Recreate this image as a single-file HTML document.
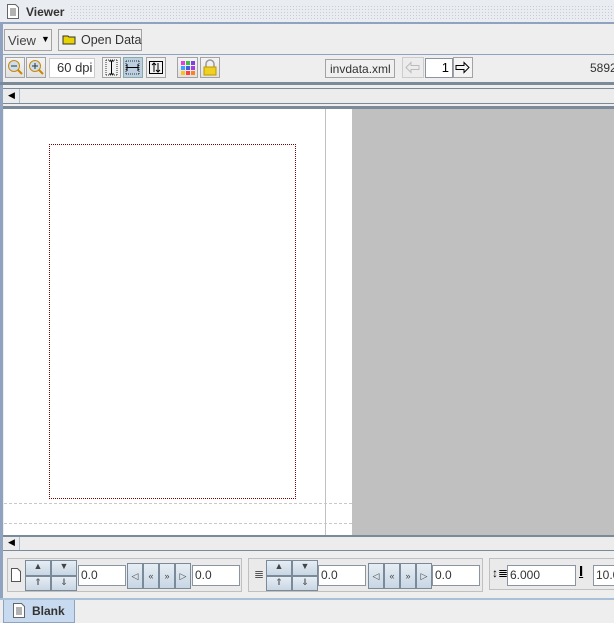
<!DOCTYPE html>
<html><head><style>
*{margin:0;padding:0;box-sizing:border-box}
body{width:614px;height:623px;overflow:hidden;background:#eeeeee;font-family:"Liberation Sans",sans-serif;font-size:12px;position:relative;color:#333;white-space:nowrap}
.a{position:absolute}
.btn{position:absolute;border:1px solid #a3a3a3;background:linear-gradient(#f4f4f4,#e2e2e2)}
.fld{position:absolute;background:#fff;border:1px solid #8a94a3;font-size:12px;line-height:18px;color:#333}
.sb{position:absolute;border:1px solid #7a8a99;background:linear-gradient(#e6edf4,#c8d6e4);font-size:9px;text-align:center;color:#444}
.num{color:#333;font-size:12px;padding-left:2px}
</style></head><body>
<div class="a" style="left:0;top:0;width:614px;height:24px;background:#e9ecf0;border-bottom:2px solid #8fa3c0"></div>
<div class="a" style="left:70px;top:5px;width:544px;height:14px;background-image:radial-gradient(#c6ccd4 0.6px,transparent 0.7px);background-size:3px 3px"></div>
<svg class="a" style="left:7px;top:4px" width="12" height="15"><path d="M0.5 0.5h8l3 3v11h-11z" fill="#fff" stroke="#666"/><path d="M3 5h6M3 7h6M3 9h6M3 11h6" stroke="#666"/></svg>
<div class="a" style="left:26px;top:5px;font-weight:bold;font-size:12px;color:#333">Viewer</div>
<div class="a" style="left:0;top:24px;width:3px;height:575px;background:#8fa3c0"></div>
<div class="btn" style="left:4px;top:29px;width:48px;height:22px;background:#f0f0f0"><span class="a" style="left:3px;top:3px;color:#444;font-size:13px">View</span><span class="a" style="left:36px;top:4px;font-size:9px;color:#000">▼</span></div>
<div class="btn" style="left:58px;top:29px;width:84px;height:22px;background:#f0f0f0"><svg class="a" style="left:3px;top:4px" width="14" height="11"><path d="M1 2h5l1 1h6v7H1z" fill="#e8d200" stroke="#333"/></svg><span class="a" style="left:22px;top:3px;font-size:12.5px;color:#333">Open Data</span></div>
<div class="a" style="left:0;top:54px;width:614px;height:1px;background:#8fa3c0"></div>
<div class="btn" style="left:5px;top:57px;width:20px;height:21px"><svg width="18" height="19"><circle cx="8" cy="8" r="5.5" fill="#cde" stroke="#c80"/><path d="M5 8h6" stroke="#333"/><path d="M12 12l4 4" stroke="#c80" stroke-width="2"/></svg></div>
<div class="btn" style="left:26px;top:57px;width:20px;height:21px"><svg width="18" height="19"><circle cx="8" cy="8" r="5.5" fill="#cde" stroke="#c80"/><path d="M5 8h6M8 5v6" stroke="#333"/><path d="M12 12l4 4" stroke="#c80" stroke-width="2"/></svg></div>
<div class="fld" style="left:49px;top:58px;width:46px;height:20px;border-color:#ccc;padding-left:7px;font-size:13px">60 dpi</div>
<div class="btn" style="left:102px;top:57px;width:19px;height:21px;background:#f2f2f2"><svg width="17" height="19"><path d="M3 2v15M14 2v15M3 2h11M3 17h11" stroke="#333" stroke-dasharray="1 1"/><path d="M6 3h5M6 16h5M8.5 3v13" stroke="#000"/></svg></div>
<div class="btn" style="left:123px;top:57px;width:20px;height:21px;background:#bcd0e2;border-color:#8aa"><svg width="18" height="19"><path d="M2 3v13M15 3v13M2 3h13M2 16h13" stroke="#333" stroke-dasharray="1 1"/><path d="M3 6v7M14 6v7M3 9.5h11" stroke="#000"/></svg></div>
<div class="btn" style="left:146px;top:57px;width:20px;height:21px;background:#f2f2f2"><svg width="18" height="19"><rect x="2.5" y="3.5" width="13" height="12" fill="none" stroke="#000"/><path d="M7 5v9M11 5v9M5 7l2-2 2 2M9 12l2 2 2-2" stroke="#000" fill="none"/></svg></div>
<div class="btn" style="left:177px;top:57px;width:21px;height:21px"><svg width="19" height="19"><g><rect x="3" y="3" width="4" height="4" fill="#e040e0"/><rect x="8" y="3" width="4" height="4" fill="#40c040"/><rect x="13" y="3" width="4" height="4" fill="#8040e0"/><rect x="3" y="8" width="4" height="4" fill="#40a0ff"/><rect x="8" y="8" width="4" height="4" fill="#4060e0"/><rect x="13" y="8" width="4" height="4" fill="#a040e0"/><rect x="3" y="13" width="4" height="4" fill="#ffc020"/><rect x="8" y="13" width="4" height="4" fill="#ff4040"/><rect x="13" y="13" width="4" height="4" fill="#ff8020"/></g></svg></div>
<div class="btn" style="left:200px;top:57px;width:20px;height:21px"><svg width="18" height="19"><path d="M5 9V6a4 4 0 0 1 8 0v3" fill="none" stroke="#999" stroke-width="1.5"/><rect x="3" y="9" width="12" height="8" fill="#f0d020" stroke="#b90"/></svg></div>
<div class="btn" style="left:325px;top:59px;width:70px;height:19px;background:#f0f0f0"><span class="a" style="left:4px;top:2px;font-size:12px;color:#333">invdata.xml</span></div>
<div class="btn" style="left:402px;top:57px;width:22px;height:21px;border-color:#ccc;background:#ececec"><svg width="20" height="19"><path d="M3 9.5l5-5v3h8v4H8v3z" fill="none" stroke="#bbb"/></svg></div>
<div class="fld" style="left:425px;top:58px;width:28px;height:20px;text-align:right;padding-right:3px;font-size:13px;color:#000">1</div>
<div class="btn" style="left:453px;top:57px;width:20px;height:21px;background:#f4f4f4"><svg width="18" height="19"><path d="M15 9.5l-5-5v3H2v4h8v3z" fill="none" stroke="#000"/></svg></div>
<div class="a" style="left:590px;top:61px;font-size:12px;color:#333">5892</div>
<div class="a" style="left:0;top:82px;width:614px;height:3px;background:#7a8a99"></div>
<div class="a" style="left:3px;top:88px;width:611px;height:16px;background:#ececec;border-top:1px solid #7a8a99;border-bottom:1px solid #7a8a99"></div>
<div class="a" style="left:3px;top:89px;width:17px;height:14px;border-right:1px solid #a8c0d8;background:#ececec"><span class="a" style="left:5px;top:1px;font-size:9px;color:#000">◀</span></div>
<div class="a" style="left:3px;top:106px;width:611px;height:3px;background:#7a8a99"></div>
<div class="a" style="left:4px;top:109px;width:348px;height:426px;background:#fff"></div>
<div class="a" style="left:352px;top:109px;width:262px;height:426px;background:#c0c0c0"></div>
<div class="a" style="left:325px;top:109px;width:1px;height:426px;background:#c0c0c0"></div>
<div class="a" style="left:49px;top:144px;width:247px;height:355px;border:1px dotted #800000"></div>
<div class="a" style="left:4px;top:503px;width:348px;height:0;border-top:1px dashed #c8c8c8"></div>
<div class="a" style="left:4px;top:523px;width:348px;height:0;border-top:1px dashed #c8c8c8"></div>
<div class="a" style="left:3px;top:535px;width:611px;height:2px;background:#7a8a99"></div>
<div class="a" style="left:3px;top:537px;width:611px;height:14px;background:#ececec;border-bottom:1px solid #7a8a99"></div>
<div class="a" style="left:3px;top:537px;width:17px;height:13px;border-right:1px solid #a8c0d8"><span class="a" style="left:5px;top:0px;font-size:9px;color:#000">◀</span></div>
<div class="a" style="left:7px;top:558px;width:235px;height:34px;border:1px solid #c0c0c0;background:#eaeaea"></div>
<svg class="a" style="left:11px;top:568px" width="11" height="14"><path d="M0.5 0.5h6l3 3v10h-9z" fill="#fff" stroke="#555"/></svg>
<div class="sb" style="left:25px;top:560px;width:26px;height:16px">▲</div>
<div class="sb" style="left:51px;top:560px;width:26px;height:16px">▼</div>
<div class="sb" style="left:25px;top:576px;width:26px;height:15px">⇑</div>
<div class="sb" style="left:51px;top:576px;width:26px;height:15px">⇓</div>
<div class="fld num" style="left:78px;top:565px;width:48px;height:21px">0.0</div>
<div class="sb" style="left:127px;top:563px;width:16px;height:26px;line-height:24px">◁</div>
<div class="sb" style="left:143px;top:563px;width:16px;height:26px;line-height:24px">«</div>
<div class="sb" style="left:159px;top:563px;width:16px;height:26px;line-height:24px">»</div>
<div class="sb" style="left:175px;top:563px;width:16px;height:26px;line-height:24px">▷</div>
<div class="fld num" style="left:192px;top:565px;width:48px;height:21px">0.0</div>
<div class="a" style="left:248px;top:558px;width:235px;height:34px;border:1px solid #c0c0c0;background:#eaeaea"></div>
<div class="a" style="left:254px;top:567px;font-size:12px;color:#555">≣</div>
<div class="sb" style="left:266px;top:560px;width:26px;height:16px">▲</div>
<div class="sb" style="left:292px;top:560px;width:26px;height:16px">▼</div>
<div class="sb" style="left:266px;top:576px;width:26px;height:15px">⇑</div>
<div class="sb" style="left:292px;top:576px;width:26px;height:15px">⇓</div>
<div class="fld num" style="left:318px;top:565px;width:48px;height:21px">0.0</div>
<div class="sb" style="left:368px;top:563px;width:16px;height:26px;line-height:24px">◁</div>
<div class="sb" style="left:384px;top:563px;width:16px;height:26px;line-height:24px">«</div>
<div class="sb" style="left:400px;top:563px;width:16px;height:26px;line-height:24px">»</div>
<div class="sb" style="left:416px;top:563px;width:16px;height:26px;line-height:24px">▷</div>
<div class="fld num" style="left:432px;top:565px;width:48px;height:21px">0.0</div>
<div class="a" style="left:489px;top:558px;width:130px;height:32px;border:1px solid #c0c0c0;background:#eaeaea"></div>
<div class="a" style="left:492px;top:566px;font-size:12px;color:#000">↕≣</div>
<div class="fld num" style="left:507px;top:565px;width:69px;height:21px">6.000</div>
<div class="a" style="left:579px;top:563px;font-weight:bold;font-size:15px;color:#000;text-decoration:underline">I</div>
<div class="fld num" style="left:593px;top:565px;width:30px;height:21px">10.0</div>
<div class="a" style="left:0;top:598px;width:614px;height:2px;background:#a8c0d8"></div>
<div class="a" style="left:3px;top:600px;width:72px;height:23px;background:#c8daf0;border:1px solid #8fa3c0;border-top:none"></div>
<svg class="a" style="left:13px;top:603px" width="12" height="15"><path d="M0.5 0.5h8l3 3v11h-11z" fill="#fff" stroke="#666"/><path d="M3 5h6M3 7h6M3 9h6M3 11h6" stroke="#666"/></svg>
<div class="a" style="left:32px;top:604px;font-weight:bold;font-size:12px;color:#333">Blank</div>
</body></html>
